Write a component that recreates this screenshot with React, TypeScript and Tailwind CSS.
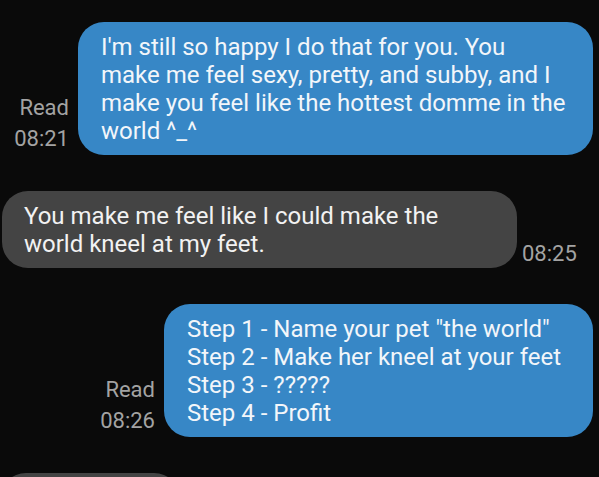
import React from 'react';

const font = { fontFamily: 'Roboto, "Noto Sans", sans-serif' };

const Meta: React.FC<{ read?: boolean; time: string }> = ({ read, time }) => (
    <div className="flex flex-col items-end text-[22px] leading-[31px] text-[#a3a3a3] mb-[1px]">
        {read && <span>Read</span>}
        <span>{time}</span>
    </div>
);

const App: React.FC = () => {
    return (
        <div className="w-[599px] h-[477px] overflow-hidden bg-[#0a0a0a] pt-[22px] flex flex-col gap-[36px]" style={font}>
            {/* sent */}
            <div className="flex justify-end items-end pr-[6px] gap-[9px]">
                <Meta read time="08:21" />
                <div className="w-[515px] bg-[#3787c6] text-[#f2f6fa] rounded-[26px] pl-[23px] pr-3 pt-[11px] pb-[10px] text-[24px] leading-[28px]">
                    I'm still so happy I do that for you. You<br />
                    make me feel sexy, pretty, and subby, and I<br />
                    make you feel like the hottest domme in the<br />
                    world ^_^
                </div>
            </div>

            {/* received */}
            <div className="flex items-end pl-[2px] gap-[5px]">
                <div className="w-[515px] bg-[#444444] text-[#f2f2f2] rounded-[26px] pl-[22px] pr-3 pt-[11px] pb-[10px] text-[24px] leading-[28px]">
                    You make me feel like I could make the<br />
                    world kneel at my feet.
                </div>
                <div className="text-[22px] leading-[28px] text-[#a3a3a3]">08:25</div>
            </div>

            {/* sent */}
            <div className="flex justify-end items-end pr-[6px] gap-[9px]">
                <Meta read time="08:26" />
                <div className="w-[429px] bg-[#3787c6] text-[#f2f6fa] rounded-[26px] pl-[23px] pr-3 pt-[11px] pb-[10px] text-[24px] leading-[28px]">
                    Step 1 - Name your pet "the world"<br />
                    Step 2 - Make her kneel at your feet<br />
                    Step 3 - ?????<br />
                    Step 4 - Profit
                </div>
            </div>

            {/* next received, cut off */}
            <div className="flex">
                <div className="w-[180px] h-[60px] bg-[#444444] rounded-[26px]"></div>
            </div>
        </div>
    );
};

export default App;
